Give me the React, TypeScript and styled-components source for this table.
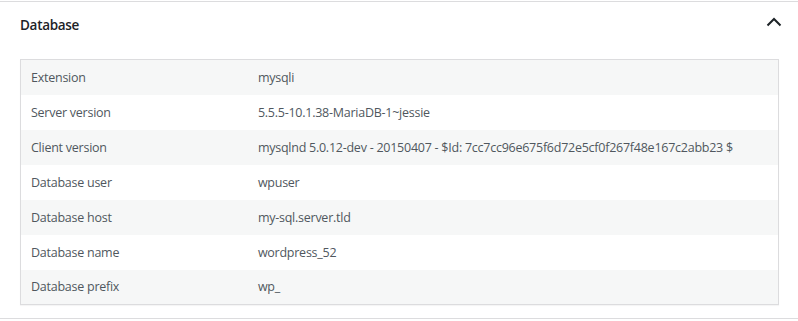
import React from "react";
import styled, { createGlobalStyle } from "styled-components";

const Global = createGlobalStyle`
  html, body { margin: 0; padding: 0; background: #fff; }
  body { font-family: "Open Sans", "Liberation Sans", sans-serif; }
`;

const Section = styled.section`
  border-top: 1px solid #dcdcde;
  border-bottom: 1px solid #dcdcde;
  margin-top: 1px;
  width: 798px;
  box-sizing: border-box;
`;

const Header = styled.div`
  height: 57px;
  display: flex;
  align-items: flex-start;
  justify-content: space-between;
  padding: 13px 16px 0 20px;
  box-sizing: border-box;
`;

const Title = styled.h3`
  margin: 0;
  font-size: 13.5px;
  line-height: 20px;
  font-weight: 600;
  color: #1d2327;
  letter-spacing: -0.3px;
`;

const ToggleIcon = styled.svg`
  margin-top: -1px;
  flex: none;
`;

const Body = styled.div`
  padding: 0 19px 13px 20px;
`;

const Table = styled.table`
  width: 100%;
  border-collapse: collapse;
  border: 1px solid #dcdcde;
  box-shadow: 0 1px 1px rgba(0, 0, 0, 0.04);
  table-layout: fixed;
`;

const Row = styled.tr<{ $odd: boolean }>`
  height: 35px;
  background: ${(p) => (p.$odd ? "#f6f7f7" : "#fff")};
`;

const Cell = styled.td<{ $label?: boolean }>`
  box-sizing: border-box;
  padding: 0 10px;
  font-size: 12.5px;
  letter-spacing: -0.25px;
  color: #50575e;
  width: ${(p) => (p.$label ? "30%" : "auto")};
  white-space: nowrap;
`;

const rows: [string, string][] = [
  ["Extension", "mysqli"],
  ["Server version", "5.5.5-10.1.38-MariaDB-1~jessie"],
  ["Client version", "mysqlnd 5.0.12-dev - 20150407 - $Id: 7cc7cc96e675f6d72e5cf0f267f48e167c2abb23 $"],
  ["Database user", "wpuser"],
  ["Database host", "my-sql.server.tld"],
  ["Database name", "wordpress_52"],
  ["Database prefix", "wp_"],
];

export default function App() {
  return (
    <>
      <Global />
      <Section>
        <Header>
          <Title>Database</Title>
          <ToggleIcon width="16" height="16" viewBox="0 0 16 16" aria-hidden="true">
            <polyline points="1.5,11.5 8,5 14.5,11.5" fill="none" stroke="#1d2327" strokeWidth="2" />
          </ToggleIcon>
        </Header>
        <Body>
          <Table>
            <tbody>
              {rows.map(([k, v], i) => (
                <Row key={k} $odd={i % 2 === 0}>
                  <Cell $label>{k}</Cell>
                  <Cell>{v}</Cell>
                </Row>
              ))}
            </tbody>
          </Table>
        </Body>
      </Section>
    </>
  );
}
